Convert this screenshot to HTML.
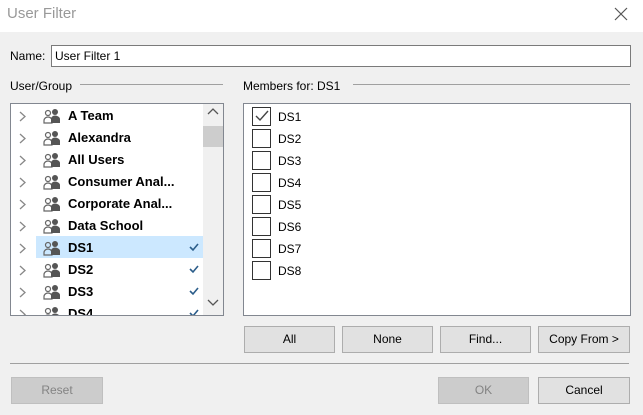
<html><head><style>
body{margin:0;width:643px;height:415px;background:#f0f0f0;font-family:"Liberation Sans",sans-serif;font-size:12px;color:#000;position:relative;overflow:hidden}
.a{position:absolute}
.title{left:0;top:0;width:643px;height:32px;background:#fff}
.btn{position:absolute;height:25px;border:1px solid #adadad;background:#e1e1e1;text-align:center;line-height:25px;font-size:12px}
.dis{background:#cccccc;border-color:#bfbfbf;color:#838383}
.row{position:absolute;left:0;width:192px;height:22px;line-height:22px}
.row b{position:absolute;left:57px;font-size:13px}
.chev{position:absolute;left:8px;top:6px}
.ic{position:absolute;left:32px;top:3px}
.ck{position:absolute;left:178px;top:6px}
.cb{position:absolute;left:8px;width:17px;height:17px;border:1px solid #333;background:#fff}
.cl{position:absolute;left:34px;font-size:12px}
</style></head><body>
<div class="a title"></div>
<div class="a" style="left:7px;top:5px;font-size:15px;color:#999">User Filter</div>
<svg class="a" style="left:614px;top:7px" width="14" height="14"><path d="M1 1L13 13M13 1L1 13" stroke="#555" stroke-width="1.2"/></svg>
<div class="a" style="left:10px;top:49px">Name:</div>
<div class="a" style="left:51px;top:45px;width:578px;height:20px;border:1px solid #7a7a7a;background:#fff;line-height:20px;text-indent:3px">User Filter 1</div>
<div class="a" style="left:10px;top:79px">User/Group</div>
<div class="a" style="left:80px;top:84px;width:143px;border-top:1px solid #a0a0a0"></div>
<div class="a" style="left:243px;top:79px">Members for: DS1</div>
<div class="a" style="left:353px;top:84px;width:277px;border-top:1px solid #a0a0a0"></div>
<div class="a" style="left:10px;top:103px;width:212px;height:211px;border:1px solid #828790;background:#fff;overflow:hidden">
<div class="a" style="left:192px;top:0;width:20px;height:211px;background:#f0f0f0"></div>
<div class="a" style="left:192px;top:22px;width:20px;height:21px;background:#cdcdcd"></div>
<svg class="a" style="left:196px;top:4px" width="12" height="8"><path d="M1 6L6 1L11 6" stroke="#555" fill="none" stroke-width="1.3"/></svg>
<svg class="a" style="left:196px;top:195px" width="12" height="8"><path d="M1 1L6 6L11 1" stroke="#555" fill="none" stroke-width="1.3"/></svg>
<div class="a" style="left:25px;top:132px;width:167px;height:22px;background:#cce8ff"></div>
<div id="rows"></div>
</div>
<div class="a" style="left:243px;top:103px;width:386px;height:211px;border:1px solid #828790;background:#fff">
<div class="cb" style="top:3px"></div><svg class="a" style="left:11px;top:6px" width="14" height="12"><path d="M1 6L5 10L13 1" stroke="#444" fill="none" stroke-width="1.4"/></svg><div class="cl" style="top:6px">DS1</div>
<div class="cb" style="top:25px"></div><div class="cl" style="top:28px">DS2</div>
<div class="cb" style="top:47px"></div><div class="cl" style="top:50px">DS3</div>
<div class="cb" style="top:69px"></div><div class="cl" style="top:72px">DS4</div>
<div class="cb" style="top:91px"></div><div class="cl" style="top:94px">DS5</div>
<div class="cb" style="top:113px"></div><div class="cl" style="top:116px">DS6</div>
<div class="cb" style="top:135px"></div><div class="cl" style="top:138px">DS7</div>
<div class="cb" style="top:157px"></div><div class="cl" style="top:160px">DS8</div>
</div>
<div class="btn" style="left:244px;top:326px;width:89px">All</div>
<div class="btn" style="left:342px;top:326px;width:89px">None</div>
<div class="btn" style="left:440px;top:326px;width:89px">Find...</div>
<div class="btn" style="left:538px;top:326px;width:90px">Copy From &gt;</div>
<div class="a" style="left:10px;top:363px;width:619px;border-top:1px solid #a0a0a0"></div>
<div class="btn dis" style="left:11px;top:377px;width:90px">Reset</div>
<div class="btn dis" style="left:438px;top:377px;width:89px">OK</div>
<div class="btn" style="left:538px;top:377px;width:90px">Cancel</div>
<script>
var n=["A Team","Alexandra","All Users","Consumer Anal...","Corporate Anal...","Data School","DS1","DS2","DS3","DS4"],h="";
n.forEach(function(t,i){var c=i>=6?'<svg class="ck" width="10" height="9"><path d="M1 4L4 7L9 1" stroke="#2b5d8a" fill="none" stroke-width="1.6"/></svg>':'';
h+='<div class="row" style="top:'+(1+i*22)+'px"><svg class="chev" width="8" height="11"><path d="M1 1L6 5.5L1 10" stroke="#888" fill="none" stroke-width="1.3"/></svg><svg class="ic" width="18" height="16"><circle cx="5" cy="5" r="2.5" fill="none" stroke="#666" stroke-width="1.2"/><path d="M1 15v-2.5c0-2 2-3.5 4-3.5s4 1.5 4 3.5V15z" fill="none" stroke="#666" stroke-width="1.2"/><circle cx="12" cy="4" r="3" fill="#555"/><path d="M8 15v-4c0-2 2-3.5 4-3.5s5 1.5 5 3.5v4z" fill="#555"/></svg><b>'+t+'</b>'+c+'</div>';});
document.getElementById("rows").innerHTML=h;
</script>
</body></html>
